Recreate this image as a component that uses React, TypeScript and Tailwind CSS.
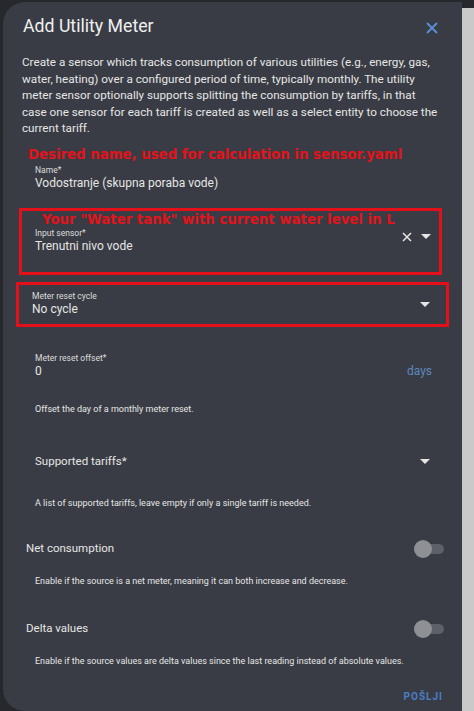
const Caret = () => (
  <svg width="10" height="5" viewBox="0 0 10 5" className="shrink-0">
    <path d="M0 0 L10 0 L5 5 Z" fill="#e6e6e6" />
  </svg>
);

const Toggle = () => (
  <div className="relative h-[18px] w-[30px]">
    <div className="absolute left-[6px] top-[4px] h-[10px] w-[24px] rounded-full bg-[#5d6068]" />
    <div className="absolute left-0 top-0 h-[18px] w-[18px] rounded-full bg-[#8e9096]" />
  </div>
);

const redNote = 'font-bold text-[#e3131b] [font-family:"DejaVu_Sans",sans-serif]';

export default function App() {
  return (
    <div
      className="flex h-[711px] w-[474px] overflow-hidden bg-[#26282d] text-[#e6e6e6]"
      style={{ fontFamily: 'Roboto, "Liberation Sans", sans-serif' }}
    >
      <div className="ml-[3px] mt-[2px] flex w-[459px] flex-col rounded-l-[22px] bg-[#393c44]">
        <div className="flex items-center justify-between pl-[20px] pr-[24px] pt-[14px]">
          <h1 className="text-[17.7px] font-normal leading-[21px] text-[#f0f0f0]">Add Utility Meter</h1>
          <svg width="12" height="12" viewBox="0 0 12 12" className="mt-[2px]">
            <path d="M1 1 L11 11 M11 1 L1 11" stroke="#5b8fd4" strokeWidth="1.8" />
          </svg>
        </div>

        <p className="mt-[17px] whitespace-nowrap pl-[19px] text-[11.7px] leading-[16.6px] text-[#e6e6e6]">
          Create a sensor which tracks consumption of various utilities (e.g., energy, gas,
          <br />
          water, heating) over a configured period of time, typically monthly. The utility
          <br />
          meter sensor optionally supports splitting the consumption by tariffs, in that
          <br />
          case one sensor for each tariff is created as well as a select entity to choose the
          <br />
          current tariff.
        </p>

        <div className={`mt-[8px] pl-[25px] text-[13.3px] leading-[20px] ${redNote}`}>
          Desired name, used for calculation in sensor.yaml
        </div>
        <div className="pl-[32px]">
          <div className="text-[8.5px] leading-[10px] text-[#dcdcdc]">Name*</div>
          <div className="mt-[1px] text-[12px] leading-[15px]">Vodostranje (skupna poraba vode)</div>
        </div>

        <div className="ml-[16px] mt-[17px] h-[67px] w-[423px] border-[3px] border-[#e3101a]">
          <div className={`pl-[20px] text-[13.3px] leading-[17px] ${redNote}`}>
            Your "Water tank" with current water level in L
          </div>
          <div className="flex items-start justify-between pl-[13px] pr-[8px]">
            <div>
              <div className="text-[8.5px] leading-[10px] text-[#dcdcdc]">Input sensor*</div>
              <div className="mt-[1px] text-[12px] leading-[15px]">Trenutni nivo vode</div>
            </div>
            <div className="mt-[4px] flex items-center gap-[9px]">
              <svg width="10" height="10" viewBox="0 0 10 10">
                <path d="M1 1 L9 9 M9 1 L1 9" stroke="#e6e6e6" strokeWidth="1.5" />
              </svg>
              <Caret />
            </div>
          </div>
        </div>

        <div className="ml-[13px] mt-[7px] flex h-[45px] w-[433px] items-center justify-between border-[3px] border-[#e3101a] pl-[13px] pr-[16px]">
          <div>
            <div className="text-[8.5px] leading-[10px] text-[#dcdcdc]">Meter reset cycle</div>
            <div className="mt-[1px] text-[12px] leading-[15px]">No cycle</div>
          </div>
          <Caret />
        </div>

        <div className="mt-[26px] flex items-end justify-between pl-[32px] pr-[30px]">
          <div>
            <div className="text-[8.5px] leading-[10px] text-[#dcdcdc]">Meter reset offset*</div>
            <div className="mt-[1px] text-[12px] leading-[15px]">0</div>
          </div>
          <div className="text-[12px] leading-[15px] text-[#5d87bd]">days</div>
        </div>
        <div className="mt-[25px] pl-[32px] text-[9px] leading-[10px]">Offset the day of a monthly meter reset.</div>

        <div className="mt-[40px] flex items-center justify-between pl-[32px] pr-[32px]">
          <div className="text-[11.5px] leading-[15px]">Supported tariffs*</div>
          <Caret />
        </div>
        <div className="mt-[29px] pl-[32px] text-[9px] leading-[10px]">
          A list of supported tariffs, leave empty if only a single tariff is needed.
        </div>

        <div className="mt-[32px] flex items-center justify-between pl-[23px] pr-[18px]">
          <div className="text-[11.5px] leading-[15px]">Net consumption</div>
          <Toggle />
        </div>
        <div className="mt-[18px] pl-[32px] text-[9px] leading-[10px]">
          Enable if the source is a net meter, meaning it can both increase and decrease.
        </div>

        <div className="mt-[34px] flex items-center justify-between pl-[23px] pr-[18px]">
          <div className="text-[11.5px] leading-[15px]">Delta values</div>
          <Toggle />
        </div>
        <div className="mt-[18px] pl-[32px] text-[9px] leading-[10px]">
          Enable if the source values are delta values since the last reading instead of absolute values.
        </div>

        <div className="mt-[24px] flex justify-end pr-[19px]">
          <span className="text-[10px] font-bold leading-[14px] tracking-[1px] text-[#4c7ec4]">POŠLJI</span>
        </div>
      </div>
      <div className="mt-[8px] w-[12px] bg-[#c9c9c9]" />
    </div>
  );
}
